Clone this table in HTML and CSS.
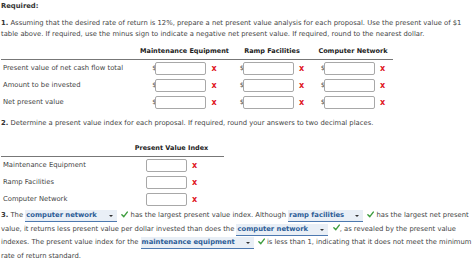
FILE: index.html
```html
<!DOCTYPE html>
<html>
<head>
<meta charset="utf-8">
<link rel="stylesheet" href="styles.css">
</head>
<body>
<div class="page">
  <div class="title">Required:</div>
  <p class="para"><b class="num">1.</b> Assuming that the desired rate of return is 12%, prepare a net present value analysis for each proposal. Use the present value of $1 table above. If required, use the minus sign to indicate a negative net present value. If required, round to the nearest dollar.</p>

  <div class="grid1">
    <div class="hd"></div>
    <div class="hd c">Maintenance Equipment</div>
    <div class="hd c">Ramp Facilities</div>
    <div class="hd c">Computer Network</div>

    <div class="lbl">Present value of net cash flow total</div>
    <div class="cell"><span class="dol">$</span><span class="box"></span><span class="x">x</span></div>
    <div class="cell"><span class="dol">$</span><span class="box"></span><span class="x">x</span></div>
    <div class="cell"><span class="dol">$</span><span class="box"></span><span class="x">x</span></div>

    <div class="lbl">Amount to be invested</div>
    <div class="cell"><span class="dol">$</span><span class="box"></span><span class="x">x</span></div>
    <div class="cell"><span class="dol">$</span><span class="box"></span><span class="x">x</span></div>
    <div class="cell"><span class="dol">$</span><span class="box"></span><span class="x">x</span></div>

    <div class="lbl">Net present value</div>
    <div class="cell"><span class="dol">$</span><span class="box"></span><span class="x">x</span></div>
    <div class="cell"><span class="dol">$</span><span class="box"></span><span class="x">x</span></div>
    <div class="cell"><span class="dol">$</span><span class="box"></span><span class="x">x</span></div>
  </div>

  <p class="para p2"><b class="num">2.</b> Determine a present value index for each proposal. If required, round your answers to two decimal places.</p>

  <div class="grid2">
    <div class="hd"></div>
    <div class="hd c">Present Value Index</div>

    <div class="lbl">Maintenance Equipment</div>
    <div class="cell"><span class="box sm"></span><span class="x">x</span></div>
    <div class="lbl">Ramp Facilities</div>
    <div class="cell"><span class="box sm"></span><span class="x">x</span></div>
    <div class="lbl">Computer Network</div>
    <div class="cell"><span class="box sm"></span><span class="x">x</span></div>
  </div>

  <p class="para p3"><b class="num">3.</b> The <span class="sel w1">computer network<i class="arr"></i></span> <svg class="ok" viewBox="0 0 8 8"><path d="M1 4.2 L3.2 6.5 L7.2 1.2"/></svg> has the largest present value index. Although <span class="sel w2">ramp facilities<i class="arr"></i></span> <svg class="ok" viewBox="0 0 8 8"><path d="M1 4.2 L3.2 6.5 L7.2 1.2"/></svg> has the largest net present value, it returns less present value per dollar invested than does the <span class="sel w1">computer network<i class="arr"></i></span> <svg class="ok" viewBox="0 0 8 8"><path d="M1 4.2 L3.2 6.5 L7.2 1.2"/></svg>, as revealed by the present value indexes. The present value index for the <span class="sel w3">maintenance equipment<i class="arr"></i></span> <svg class="ok" viewBox="0 0 8 8"><path d="M1 4.2 L3.2 6.5 L7.2 1.2"/></svg> is less than 1, indicating that it does not meet the minimum rate of return standard.</p>
</div>
</body>
</html>
```

FILE: styles.css
```css
html, body {
  margin: 0;
  padding: 0;
  background: #fff;
}
.page {
  padding: 0 1px;
  font-family: "DejaVu Sans", Verdana, sans-serif;
  font-size: 6.8px;
  line-height: 11px;
  color: #444;
  width: 472px;
}
.title {
  font-weight: bold;
  color: #333;
  line-height: 12px;
}
.para {
  margin: 6px 0 0 0;
}
.num {
  font-weight: bold;
  color: #333;
}
.grid1 {
  display: grid;
  grid-template-columns: 137px 93px 82px 80px;
  width: 392px;
  margin-top: 6px;
}
.grid2 {
  display: grid;
  grid-template-columns: 118px 105px;
  width: 223px;
  margin-top: 14px;
}
.hd {
  font-weight: bold;
  font-size: 6.5px;
  color: #222;
  padding-bottom: 2px;
  border-bottom: 1px solid #777;
}
.c {
  text-align: center;
}
.lbl {
  height: 17px;
  display: flex;
  align-items: center;
  padding-left: 2px;
}
.cell {
  height: 17px;
  display: flex;
  align-items: center;
  justify-content: center;
}
.dol {
  font-size: 6.5px;
  color: #555;
  margin-right: -1px;
}
.box {
  display: inline-block;
  width: 49px;
  height: 11px;
  border: 1px solid #a8a8a8;
  border-radius: 2px;
  background: #fff;
}
.box.sm {
  width: 39px;
}
.x {
  color: #e0161f;
  font-weight: bold;
  font-size: 8px;
  margin-left: 5px;
}
.p2 {
  margin-top: 7px;
}
.p3 {
  margin-top: 1px;
  line-height: 13.7px;
}
.sel {
  display: inline-block;
  position: relative;
  top: 1px;
  height: 11px;
  line-height: 11px;
  background: #e9eff6;
  border-bottom: 1px solid #4d79b0;
  color: #2c5d97;
  font-weight: bold;
  padding-left: 1px;
  vertical-align: top;
}
.w1 { width: 91px; }
.w2 { width: 74px; }
.w3 { width: 112px; }
.arr {
  position: absolute;
  right: 4px;
  top: 5px;
  width: 0;
  height: 0;
  border-left: 2px solid transparent;
  border-right: 2px solid transparent;
  border-top: 2px solid #333;
}
.ok {
  width: 7px;
  height: 7px;
  margin-left: 2px;
  vertical-align: -0.5px;
}
.ok path {
  fill: none;
  stroke: #3c9c3c;
  stroke-width: 1.6;
  stroke-linecap: round;
  stroke-linejoin: round;
}
```
